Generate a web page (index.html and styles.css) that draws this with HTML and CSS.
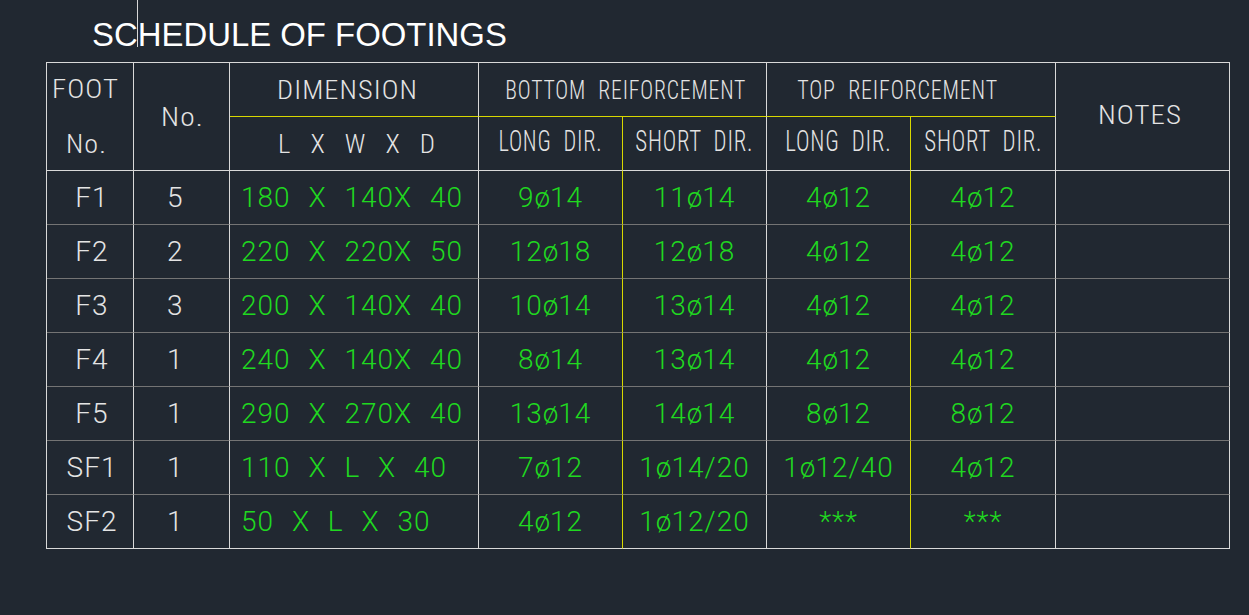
FILE: index.html
```html
<!DOCTYPE html>
<html>
<head>
<meta charset="utf-8">
<link rel="stylesheet" href="styles.css">
</head>
<body>
<div class="title">SCHEDULE OF FOOTINGS<span class="caret"></span></div>
<div class="sched">
  <div class="c h foot"><span class="ht ft">FOOT</span><span class="ht fn">No.</span></div>
  <div class="c h no2"><span class="ht">No.</span></div>
  <div class="c h dim yb"><span class="ht">DIMENSION</span></div>
  <div class="c h bot yb"><span class="ht">BOTTOM REIFORCEMENT</span></div>
  <div class="c h top yb"><span class="ht">TOP REIFORCEMENT</span></div>
  <div class="c h notes"><span class="ht">NOTES</span></div>
  <div class="c h lxw"><span class="ht">L X W X D</span></div>
  <div class="c h2 yr ld1"><span class="st">LONG DIR.</span></div>
  <div class="c h2 sd1"><span class="st">SHORT DIR.</span></div>
  <div class="c h2 yr ld2"><span class="st">LONG DIR.</span></div>
  <div class="c h2 sd2"><span class="st">SHORT DIR.</span></div>

  <div class="c r d1">F1</div><div class="c r d2">5</div><div class="c r d3">180 X 140X 40</div>
  <div class="c r g yr">9<span class="dia">ø</span>14</div><div class="c r g">11<span class="dia">ø</span>14</div>
  <div class="c r g yr">4<span class="dia">ø</span>12</div><div class="c r g">4<span class="dia">ø</span>12</div><div class="c r"></div>

  <div class="c r d1">F2</div><div class="c r d2">2</div><div class="c r d3">220 X 220X 50</div>
  <div class="c r g yr">12<span class="dia">ø</span>18</div><div class="c r g">12<span class="dia">ø</span>18</div>
  <div class="c r g yr">4<span class="dia">ø</span>12</div><div class="c r g">4<span class="dia">ø</span>12</div><div class="c r"></div>

  <div class="c r d1">F3</div><div class="c r d2">3</div><div class="c r d3">200 X 140X 40</div>
  <div class="c r g yr">10<span class="dia">ø</span>14</div><div class="c r g">13<span class="dia">ø</span>14</div>
  <div class="c r g yr">4<span class="dia">ø</span>12</div><div class="c r g">4<span class="dia">ø</span>12</div><div class="c r"></div>

  <div class="c r d1">F4</div><div class="c r d2">1</div><div class="c r d3">240 X 140X 40</div>
  <div class="c r g yr">8<span class="dia">ø</span>14</div><div class="c r g">13<span class="dia">ø</span>14</div>
  <div class="c r g yr">4<span class="dia">ø</span>12</div><div class="c r g">4<span class="dia">ø</span>12</div><div class="c r"></div>

  <div class="c r d1">F5</div><div class="c r d2">1</div><div class="c r d3">290 X 270X 40</div>
  <div class="c r g yr">13<span class="dia">ø</span>14</div><div class="c r g">14<span class="dia">ø</span>14</div>
  <div class="c r g yr">8<span class="dia">ø</span>12</div><div class="c r g">8<span class="dia">ø</span>12</div><div class="c r"></div>

  <div class="c r d1">SF1</div><div class="c r d2">1</div><div class="c r d3">110 X L X 40</div>
  <div class="c r g yr">7<span class="dia">ø</span>12</div><div class="c r g">1<span class="dia">ø</span>14/20</div>
  <div class="c r g yr">1<span class="dia">ø</span>12/40</div><div class="c r g">4<span class="dia">ø</span>12</div><div class="c r"></div>

  <div class="c r last d1">SF2</div><div class="c r last d2">1</div><div class="c r last d3">50 X L X 30</div>
  <div class="c r last g yr">4<span class="dia">ø</span>12</div><div class="c r last g">1<span class="dia">ø</span>12/20</div>
  <div class="c r last g yr ast">***</div><div class="c r last g ast">***</div><div class="c r last"></div>
</div>
</body>
</html>
```
FILE: styles.css
```css
html, body { margin: 0; padding: 0; }
body {
  background: #212831;
  width: 1249px;
  height: 615px;
  overflow: hidden;
}
.title {
  position: relative;
  box-sizing: border-box;
  height: 62px;
  padding: 19px 0 0 92px;
  font-family: "Liberation Sans", Arial, sans-serif;
  font-size: 32.9px;
  line-height: 32.9px;
  color: #ffffff;
  white-space: nowrap;
}
.caret {
  position: absolute;
  left: 137px;
  top: 0;
  width: 1px;
  height: 47px;
  background: #d8d8d8;
}
.sched {
  display: grid;
  grid-template-columns: 87px 96px 249px 144px 144px 144px 145px 174px;
  grid-template-rows: repeat(9, 54px);
  width: max-content;
  margin-left: 46px;
  border-top: 1px solid #d9d9d9;
  border-left: 1px solid #d9d9d9;
}
.c {
  box-sizing: border-box;
  border-right: 1px solid #d9d9d9;
  border-bottom: 1px solid #d9d9d9;
  display: flex;
  align-items: center;
  justify-content: center;
  white-space: nowrap;
  overflow: hidden;
}
.yb { border-bottom-color: #d8d800; }
.yr { border-right-color: #d8d800; }
.r { border-bottom-color: #747474; }
.r.last { border-bottom-color: #d9d9d9; }

/* header text */
.h, .h2 {
  color: #e4e4e4;
  font-family: "Roboto Condensed", "Roboto", sans-serif;
  font-weight: 300;
}
.h { font-size: 26.7px; }
.h2 { font-size: 29.5px; }
.ht, .st { display: inline-block; letter-spacing: 1px; }
.st { word-spacing: 8px; }
.ld1 .st { transform: scaleX(0.76); }
.sd1 .st { transform: scaleX(0.773); }
.ld2 .st { transform: scaleX(0.776); }
.sd2 .st { transform: scaleX(0.773); }

.foot {
  grid-row: span 2;
  flex-direction: column;
  align-items: flex-start;
  justify-content: space-between;
  padding: 10px 0 10px 5px;
}
.foot .ft { transform-origin: left center; transform: scaleX(1.08); }
.foot .fn { margin-left: 14px; transform-origin: left center; transform: scaleX(1.05); }
.no2 { grid-row: span 2; padding-left: 2px; }
.no2 .ht { transform: scaleX(1.1); }
.dim { padding-right: 14px; }
.dim .ht { transform: scaleX(1.06); }
.bot { grid-column: span 2; }
.bot .ht { word-spacing: 8px; transform: translateX(3px) scaleX(0.815); }
.top { grid-column: span 2; padding-right: 26px; }
.top .ht { word-spacing: 8px; transform: scaleX(0.825); }
.notes { grid-row: span 2; padding-bottom: 4px; padding-right: 6px; }
.notes .ht { transform: scaleX(1.08); }
.lxw { padding-left: 6px; word-spacing: 12px; }
.ld1, .sd1, .ld2, .sd2 { padding-bottom: 5px; }

/* data */
.r {
  font-family: "Roboto", sans-serif;
  font-weight: 300;
  font-size: 28px;
  letter-spacing: 1px;
  color: #e4e4e4;
}
.d1 { padding-left: 4px; }
.d2 { justify-content: flex-start; padding-left: 33px; }
.d3 {
  justify-content: flex-start;
  padding-left: 11px;
  color: #20d820;
  word-spacing: 10px;
}
.g { color: #20d820; }
.dia { margin: 0 -1px 0 0; }
```
